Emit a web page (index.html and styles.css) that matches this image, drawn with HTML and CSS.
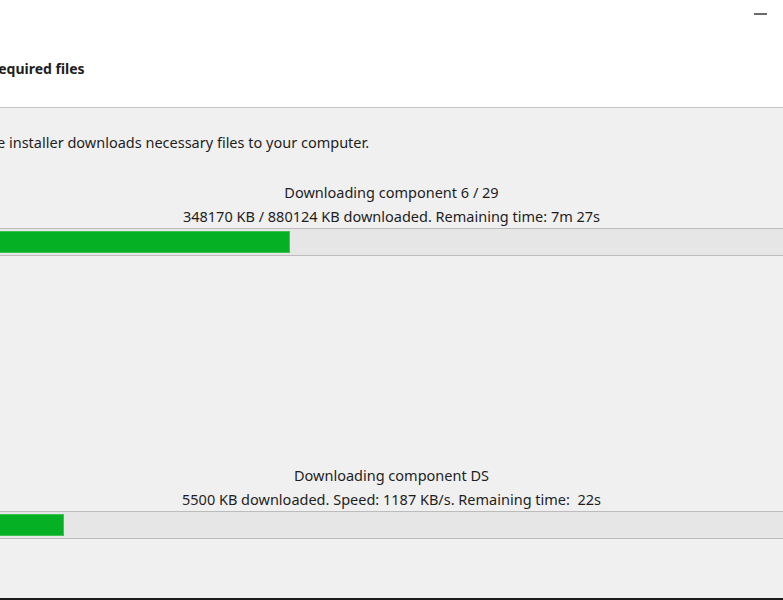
FILE: index.html
```html
<!DOCTYPE html>
<html lang="en">
<head>
    <meta charset="UTF-8">
    <meta name="viewport" content="width=device-width, initial-scale=1.0">
    <title>Setup - Downloading required files</title>
    <link rel="stylesheet" href="styles.css">
</head>
<body>
    <div class="window">
        <!-- Header -->
        <div class="header">
            <div class="title-bar">
                <span class="minimize" aria-label="Minimize"></span>
            </div>
            <h1 class="page-title">Required files</h1>
        </div>

        <!-- Body -->
        <div class="content">
            <p class="intro">The installer downloads necessary files to your computer.</p>

            <div class="status status-total">
                <div class="status-line">Downloading component 6 / 29</div>
                <div class="status-line">348170 KB / 880124 KB downloaded. Remaining time: 7m 27s</div>
                <div class="bar"><div class="bar-fill" style="width: 290px"></div></div>
            </div>

            <div class="status status-current">
                <div class="status-line">Downloading component DS</div>
                <div class="status-line">5500 KB downloaded. Speed: 1187 KB/s. Remaining time:&nbsp; 22s</div>
                <div class="bar"><div class="bar-fill" style="width: 64px"></div></div>
            </div>
        </div>
    </div>
</body>
</html>
```

FILE: styles.css
```css
html, body { margin: 0; padding: 0; }
body { font-family: "Noto Sans", "Open Sans", sans-serif; color: #1e1e1e; background-color: #f0f0f0; overflow: hidden; }
.window { height: 598px; border-bottom: 2px solid #1b1b1b; overflow: hidden; }

.header { height: 107px; background-color: #ffffff; border-bottom: 1px solid #c4c4c4; display: flex; flex-direction: column; }
.title-bar { height: 57px; display: flex; justify-content: flex-end; }
.minimize { width: 13px; height: 2px; margin: 13px 16px 0 0; background-color: #6b6b6b; }
.page-title { margin: 0 0 0 -11px; font-size: 14px; font-weight: bold; line-height: 24px; }

.content { display: flex; flex-direction: column; }
.intro { margin: 24px 0 0 -20px; font-size: 14.5px; line-height: 20px; }

.status { display: flex; flex-direction: column; text-align: center; }
.status-total { margin-top: 28px; }
.status-current { margin-top: 207px; }
.status-line { font-size: 14.5px; line-height: 24px; }

.bar { padding: 2px 0; box-sizing: border-box; height: 28px; background-color: #e6e6e6; border-top: 1px solid #bcbcbc; border-bottom: 1px solid #bcbcbc; }
.bar-fill { height: 100%; box-sizing: border-box; background-color: #06b025; border: 1px solid #3fc252; border-left: none; }
```
